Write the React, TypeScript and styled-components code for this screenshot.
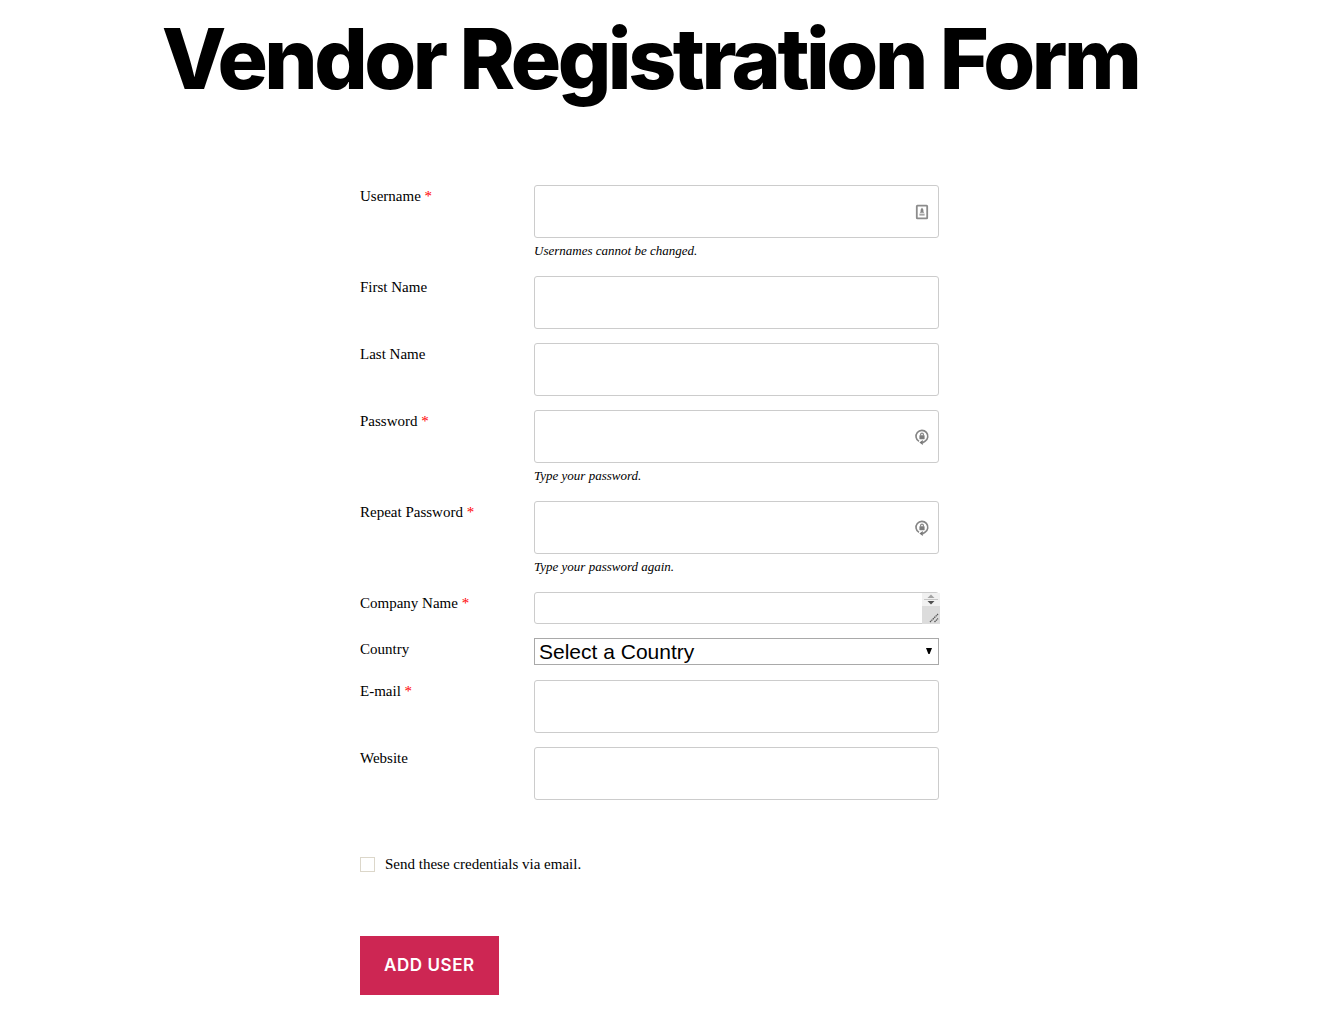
import React from "react";
import styled, { createGlobalStyle } from "styled-components";

const GlobalStyle = createGlobalStyle`
  *, *::before, *::after { box-sizing: border-box; }
  body {
    margin: 0;
    background: #fff;
    color: #000;
    font-family: Garamond, "Liberation Serif", serif;
    font-size: 15px;
    line-height: 22px;
  }
`;

const Page = styled.main`
  padding: 17px 35px 32px 0;
`;

const Title = styled.h1`
  margin: 0 0 84px;
  text-align: center;
  font-family: Inter, sans-serif;
  font-size: 84px;
  font-weight: 800;
  line-height: 84px;
  letter-spacing: -0.0415625em;
`;

const Form = styled.form`
  width: 100%;
  max-width: 580px;
  margin: 0 auto;
`;

const Fields = styled.div`
  display: grid;
  gap: 14px;
`;

const Row = styled.div`
  display: grid;
  grid-template-columns: 174px minmax(0, 405px);
  align-items: start;
  min-height: 28px;
`;

const Required = styled.span`
  color: #f00;
`;

const Control = styled.div`
  position: relative;
  display: flex;
`;

const TextInput = styled.input`
  width: 100%;
  height: 53px;
  padding: 8px 32px 8px 12px;
  border: 1px solid #ccc;
  border-radius: 3px;
  background: #fff;
  font: inherit;
`;

const TextArea = styled.textarea`
  width: 100%;
  height: 32px;
  padding: 3px 24px 3px 12px;
  border: 1px solid #ccc;
  border-radius: 3px;
  background: #fff;
  font: inherit;
  resize: none;
  overflow: hidden;
`;

const Select = styled.select`
  appearance: none;
  width: 100%;
  height: 27px;
  padding: 0 24px 0 4px;
  border: 1px solid #a9a9a9;
  border-radius: 0;
  background: #fff;
  color: #000;
  font-family: "Liberation Sans", Arial, sans-serif;
  font-size: 21px;
  line-height: 25px;
`;

const Adornment = styled.svg<{ $right: number; $top: number }>`
  position: absolute;
  right: ${(p) => p.$right}px;
  top: ${(p) => p.$top}px;
  pointer-events: none;
`;

const Hint = styled.div`
  padding-top: 2px;
  font-size: 13px;
  font-style: italic;
`;

const CheckRow = styled.div`
  display: flex;
  align-items: center;
  gap: 10px;
  margin: 53px 0 61px;
`;

const Checkbox = styled.input`
  appearance: none;
  width: 15px;
  height: 15px;
  margin: 0;
  border: 1px solid #dcd7ca;
  background: #fff;
  &:checked { background: #cd2653; }
`;

const Submit = styled.button`
  display: block;
  padding: 18px 24px;
  border: 0;
  background: #cd2653;
  color: #fff;
  font-family: Inter, sans-serif;
  font-size: 17px;
  font-weight: 600;
  line-height: 23px;
  letter-spacing: 0.0333em;
  text-transform: uppercase;
  cursor: pointer;
`;

const ContactIcon = () => (
  <Adornment $right={10} $top={19} width="14" height="16" viewBox="0 0 14 16" aria-hidden="true">
    <rect x="1.8" y="1.6" width="10.4" height="12.8" rx="0.6" fill="#fff" stroke="#8c8c8c" strokeWidth="1.8" />
    <path d="M7 3.6 8.4 5.8V7.4L9.2 8.8H4.8L5.6 7.4V5.8Z" fill="#858585" />
    <path d="M4.4 10.6H9.6" stroke="#a6a6a6" strokeWidth="2" />
  </Adornment>
);

const LockIcon = () => (
  <Adornment $right={9} $top={18} width="16" height="18" viewBox="0 0 16 18" aria-hidden="true">
    <path d="M5 13.4A5.9 5.9 0 1 1 11 13.3L8.6 14.8" fill="none" stroke="#858585" strokeWidth="1.6" />
    <path d="M8.8 12V17L5.4 14.4Z" fill="#777" />
    <path d="M6.6 7.6V6.6A1.4 1.4 0 0 1 9.4 6.6V7.6" fill="none" stroke="#888" strokeWidth="1.2" />
    <rect x="5.4" y="7.2" width="5.2" height="4" rx="0.4" fill="#7d7d7d" />
  </Adornment>
);

const ScrollGrip = () => (
  <Adornment $right={-1} $top={1} width="18" height="31" viewBox="0 0 18 31" aria-hidden="true">
    <rect width="18" height="13" fill="#f1f1f1" />
    <rect y="13" width="18" height="18" fill="#dcdcdc" />
    <path d="M2 6.5H16" stroke="#c6c6c6" />
    <path d="M5.5 5 9 1.5 12.5 5Z" fill="#a3a3a3" />
    <path d="M5.5 8H12.5L9 11.5Z" fill="#505050" />
    <path d="M8 29 16 21M12.5 29 16 25.5" stroke="#555" strokeWidth="1.3" strokeDasharray="1.4 0.6" />
  </Adornment>
);

const SelectArrow = () => (
  <Adornment $right={6} $top={9} width="8" height="8" viewBox="0 0 8 8" aria-hidden="true">
    <path d="M1 1H7L4.6 7H3.4Z" fill="#000" />
  </Adornment>
);

type Field = {
  id: string;
  label: string;
  required?: boolean;
  hint?: string;
  kind?: "text" | "password" | "email" | "url" | "textarea" | "select";
  icon?: React.ReactNode;
};

const fields: Field[] = [
  { id: "username", label: "Username", required: true, hint: "Usernames cannot be changed.", icon: <ContactIcon /> },
  { id: "first-name", label: "First Name" },
  { id: "last-name", label: "Last Name" },
  { id: "password", label: "Password", required: true, kind: "password", hint: "Type your password.", icon: <LockIcon /> },
  { id: "repeat-password", label: "Repeat Password", required: true, kind: "password", hint: "Type your password again.", icon: <LockIcon /> },
  { id: "company", label: "Company Name", required: true, kind: "textarea", icon: <ScrollGrip /> },
  { id: "country", label: "Country", kind: "select", icon: <SelectArrow /> },
  { id: "email", label: "E-mail", required: true, kind: "email" },
  { id: "website", label: "Website", kind: "url" },
];

function FieldControl({ id, kind = "text" }: Field) {
  if (kind === "textarea") return <TextArea id={id} name={id} />;
  if (kind === "select")
    return (
      <Select id={id} name={id}>
        <option>Select a Country</option>
      </Select>
    );
  return <TextInput id={id} name={id} type={kind} />;
}

export default function App() {
  return (
    <>
      <GlobalStyle />
      <Page>
        <Title>Vendor Registration Form</Title>
        <Form onSubmit={(e) => e.preventDefault()}>
          <Fields>
            {fields.map((field) => (
              <Row key={field.id}>
                <label htmlFor={field.id}>
                  {field.label} {field.required && <Required>*</Required>}
                </label>
                <div>
                  <Control>
                    <FieldControl {...field} />
                    {field.icon}
                  </Control>
                  {field.hint && <Hint>{field.hint}</Hint>}
                </div>
              </Row>
            ))}
          </Fields>
          <CheckRow>
            <Checkbox type="checkbox" id="send" name="send" />
            <label htmlFor="send">Send these credentials via email.</label>
          </CheckRow>
          <Submit type="submit">Add User</Submit>
        </Form>
      </Page>
    </>
  );
}
